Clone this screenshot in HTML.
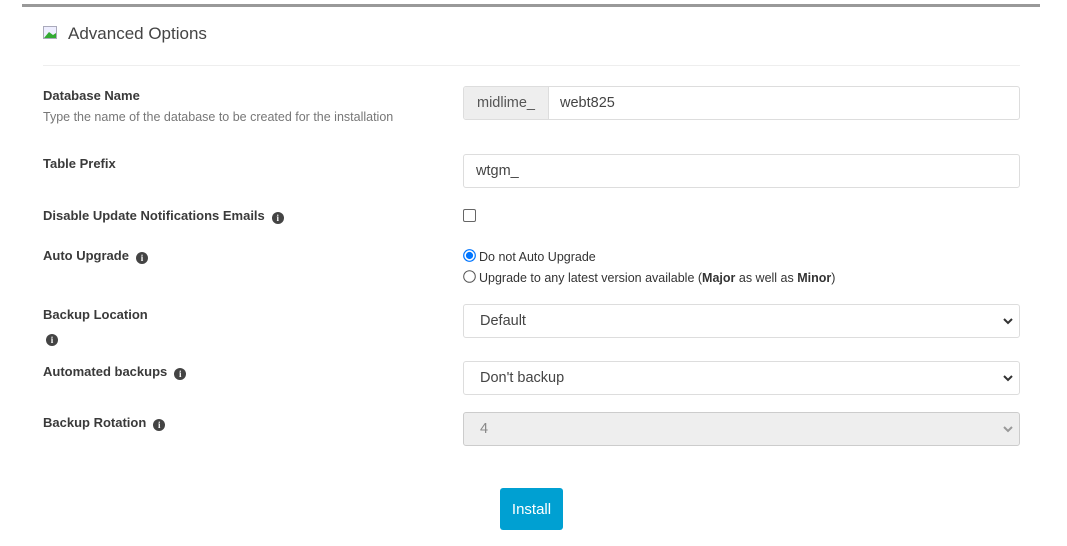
<!DOCTYPE html>
<html><head><meta charset="utf-8"><style>
body{margin:0;width:1067px;height:546px;background:#fff;font-family:"Liberation Sans",sans-serif;position:relative;overflow:hidden;color:#444}
.a{position:absolute}
.lbl{font-size:13px;font-weight:bold;color:#3a3a3a;white-space:nowrap}
.hint{font-size:12.5px;color:#777}
.i{display:inline-block;width:12px;height:12px;border-radius:50%;background:#444;color:#fff;font:bold 9px/12px "Liberation Serif",serif;text-align:center;vertical-align:-1px;margin-left:7px}
.box{position:absolute;left:463px;width:557px;border:1px solid #ddd;border-radius:3px;font-size:14.5px;color:#444;box-sizing:border-box;background:#fff}
.chev{position:absolute;right:6px;top:50%;margin-top:-4px}
</style></head><body>
<div class="a" style="left:22px;top:4px;width:1018px;height:3px;background:#999"></div>
<div class="a" style="left:43px;top:26px;width:16px;height:14px">
<svg width="16" height="14"><rect x="0.5" y="0.5" width="13" height="12" fill="#eef" stroke="#aab"/><path d="M1 12 L6 6 L10 9 L13 7 L13 12Z" fill="#3a3"/></svg></div>
<div class="a" style="left:68px;top:24px;font-size:17px;color:#444">Advanced Options</div>
<div class="a" style="left:43px;top:65px;width:977px;height:1px;background:#eee"></div>

<div class="a lbl" style="left:43px;top:88px">Database Name</div>
<div class="a hint" style="left:43px;top:110px">Type the name of the database to be created for the installation</div>
<div class="box" style="top:86px;height:34px;overflow:hidden"><div class="a" style="left:0;top:0;width:84px;height:32px;background:#eee;border-right:1px solid #ddd;line-height:32px;text-align:center;color:#555">midlime_</div><div class="a" style="left:96px;top:0;line-height:32px">webt825</div></div>

<div class="a lbl" style="left:43px;top:156px">Table Prefix</div>
<div class="box" style="top:154px;height:34px;line-height:32px;padding-left:12px">wtgm_</div>

<div class="a lbl" style="left:43px;top:208px">Disable Update Notifications Emails<span class="i">i</span></div>
<div class="a" style="left:463px;top:209px;width:11px;height:11px;border:1px solid #666;border-radius:2px"></div>

<div class="a lbl" style="left:43px;top:248px">Auto Upgrade<span class="i">i</span></div>
<svg class="a" style="left:463px;top:249px" width="13" height="13"><circle cx="6.5" cy="6.5" r="5.8" fill="#fff" stroke="#0075ff" stroke-width="1.2"/><circle cx="6.5" cy="6.5" r="3.6" fill="#0075ff"/></svg>
<div class="a" style="left:479px;top:250px;font-size:12.5px;color:#333">Do not Auto Upgrade</div>
<svg class="a" style="left:463px;top:270px" width="13" height="13"><circle cx="6.5" cy="6.5" r="5.8" fill="#fff" stroke="#555" stroke-width="1"/></svg>
<div class="a" style="left:479px;top:271px;font-size:12.5px;color:#333">Upgrade to any latest version available (<b>Major</b> as well as <b>Minor</b>)</div>

<div class="a lbl" style="left:43px;top:307px">Backup Location</div>
<div class="a lbl" style="left:39px;top:330px"><span class="i">i</span></div>
<div class="box" style="top:304px;height:34px;line-height:32px;padding-left:16px">Default<svg class="chev" width="10" height="8"><path d="M1 2 L5 6 L9 2" fill="none" stroke="#333" stroke-width="2"/></svg></div>

<div class="a lbl" style="left:43px;top:364px">Automated backups<span class="i">i</span></div>
<div class="box" style="top:361px;height:34px;line-height:32px;padding-left:16px">Don't backup<svg class="chev" width="10" height="8"><path d="M1 2 L5 6 L9 2" fill="none" stroke="#333" stroke-width="2"/></svg></div>

<div class="a lbl" style="left:43px;top:415px">Backup Rotation<span class="i">i</span></div>
<div class="box" style="top:412px;height:34px;line-height:32px;padding-left:16px;background:#eee;color:#888;border-color:#ccc">4<svg class="chev" width="10" height="8"><path d="M1 2 L5 6 L9 2" fill="none" stroke="#999" stroke-width="2"/></svg></div>

<div class="a" style="left:500px;top:488px;width:63px;height:42px;background:#00a0d2;border-radius:3px;color:#fff;font-size:15px;line-height:44px;text-align:center">Install</div>
</body></html>
